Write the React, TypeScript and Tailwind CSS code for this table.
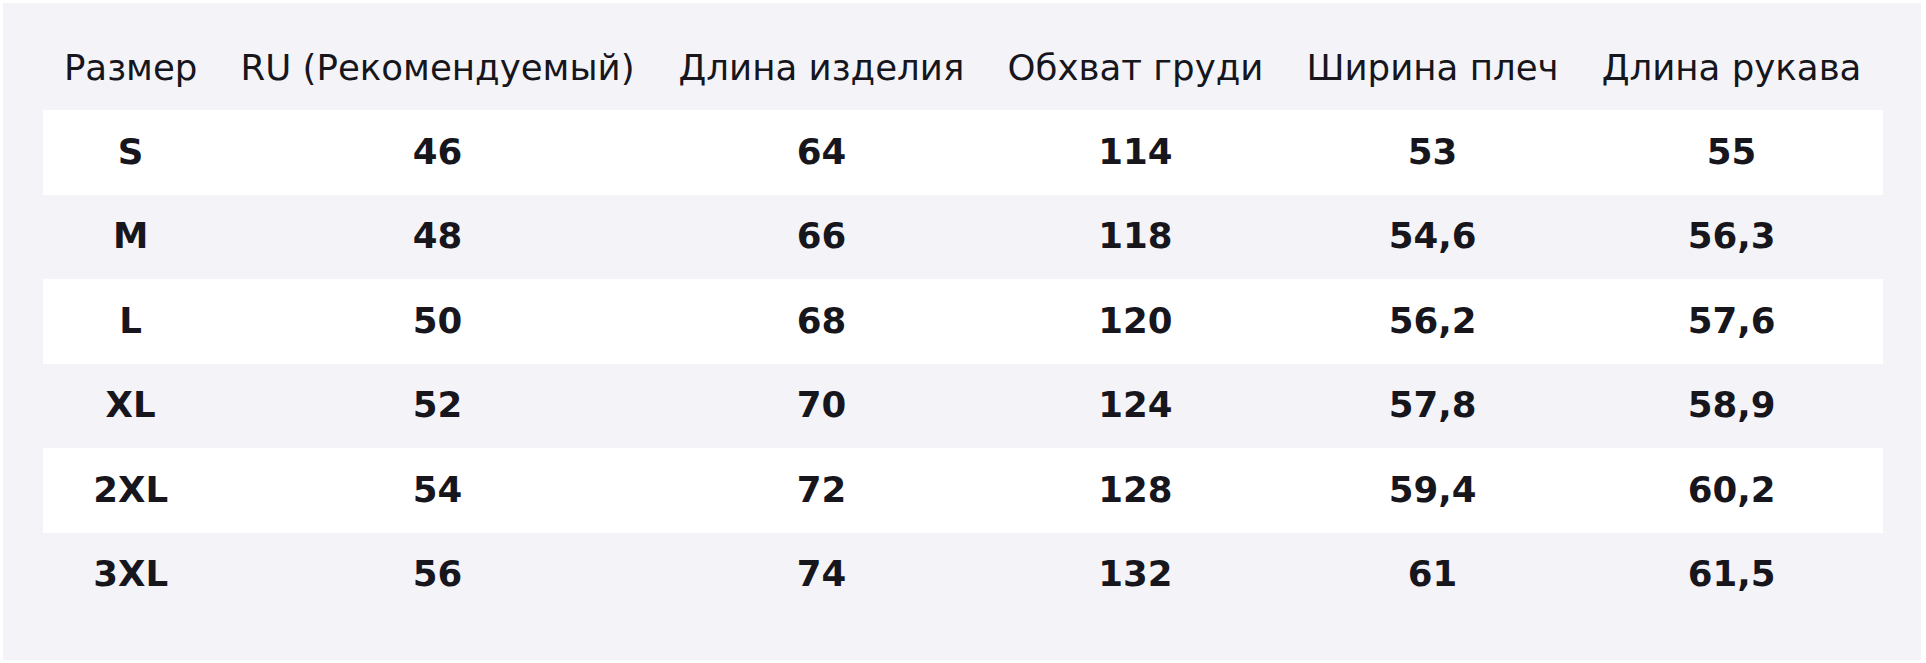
import React from "react";

const headers = [
  "Размер",
  "RU (Рекомендуемый)",
  "Длина изделия",
  "Обхват груди",
  "Ширина плеч",
  "Длина рукава",
];

const rows = [
  ["S", "46", "64", "114", "53", "55"],
  ["M", "48", "66", "118", "54,6", "56,3"],
  ["L", "50", "68", "120", "56,2", "57,6"],
  ["XL", "52", "70", "124", "57,8", "58,9"],
  ["2XL", "54", "72", "128", "59,4", "60,2"],
  ["3XL", "56", "74", "132", "61", "61,5"],
];

export default function App() {
  return (
    <div className="bg-white min-h-[663px] pt-[3px] pl-[3px]">
      <div
        className="w-[1918px] h-[657px] bg-[#f4f4f8] pl-[40px] pr-[38px] pt-[22px] text-[#16161c]"
        style={{ fontFamily: '"DejaVu Sans", sans-serif' }}
      >
        <table className="w-[1840px] border-collapse">
          <thead>
            <tr className="h-[85px]">
              {headers.map((h) => (
                <th
                  key={h}
                  className="px-[20px] text-center align-middle font-normal text-[35.6px] leading-none whitespace-nowrap"
                >
                  {h}
                </th>
              ))}
            </tr>
          </thead>
          <tbody>
            {rows.map((r, i) => (
              <tr
                key={r[0]}
                className={i % 2 === 0 ? "h-[84.6px] bg-white" : "h-[84.6px]"}
              >
                {r.map((c, j) => (
                  <td
                    key={j}
                    className="px-[20px] pb-[2px] text-center align-middle font-bold text-[35.6px] leading-none whitespace-nowrap"
                  >
                    {c}
                  </td>
                ))}
              </tr>
            ))}
          </tbody>
        </table>
      </div>
    </div>
  );
}
